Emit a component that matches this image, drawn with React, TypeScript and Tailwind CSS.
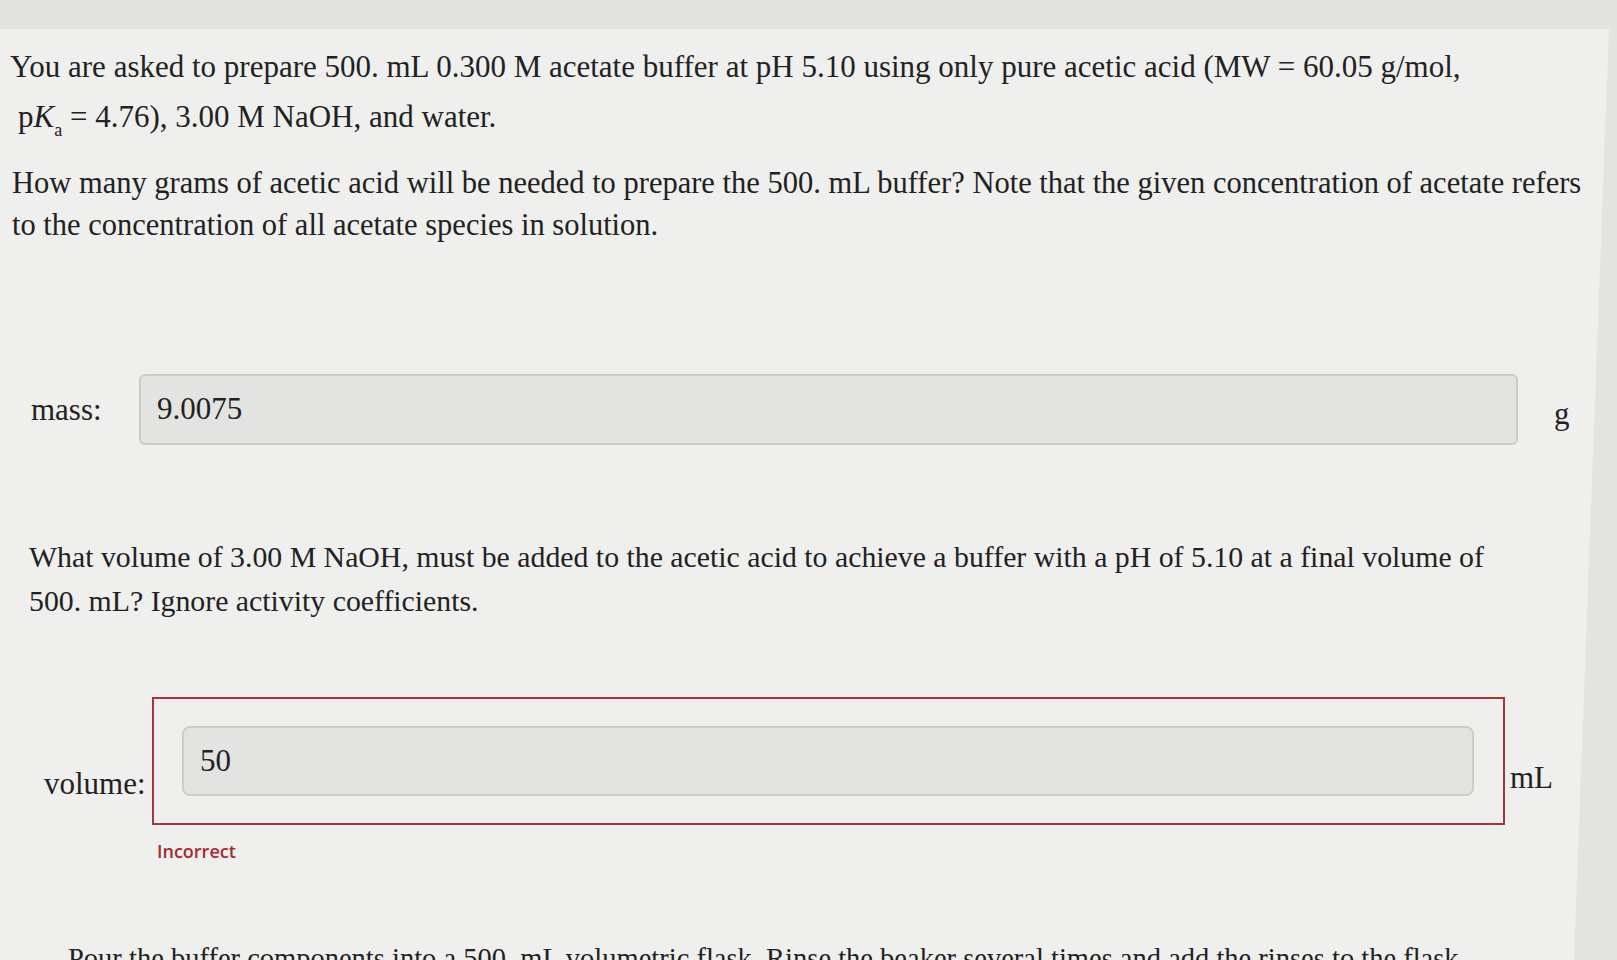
import React from "react";

const serif = { fontFamily: '"Liberation Serif", "Times New Roman", serif' };

export default function App() {
  return (
    <div
      className="w-[1617px] h-[960px] overflow-hidden bg-[#e1e1df] flex flex-col text-[#222222]"
      style={serif}
    >
      <div className="h-[29px] shrink-0 bg-[#e2e2e0]" />
      <div className="flex flex-1 min-h-0 bg-[#efefed]">
        <div className="w-[1570px] shrink-0 pt-[13px]">
          <p className="pl-[10px] text-[31px] leading-[50px] whitespace-nowrap">
            You are asked to prepare 500. mL 0.300 M acetate buffer at pH 5.10 using only pure acetic acid (MW = 60.05 g/mol,
            <br />
            <span className="pl-[8px]">
              p<i>K</i>
              <sub className="text-[18px] align-[-4px]">a</sub> = 4.76), 3.00 M NaOH, and water.
            </span>
          </p>
          <p className="mt-[20px] pl-[12px] text-[30.5px] leading-[42px] whitespace-nowrap">
            How many grams of acetic acid will be needed to prepare the 500. mL buffer? Note that the given concentration of acetate refers
            <br />
            to the concentration of all acetate species in solution.
          </p>

          <div className="mt-[128px] flex items-center">
            <span className="pl-[31px] w-[139px] shrink-0 text-[31px] leading-[32px]">mass:</span>
            <div className="w-[1379px] h-[71px] shrink-0 rounded-[6px] border-2 border-[#cbcbc9] bg-[#e3e3e1] flex items-center pl-[16px] text-[31px]">
              9.0075
            </div>
            <span className="ml-[36px] text-[31px] mt-[10px]">g</span>
          </div>

          <p className="mt-[90px] pl-[29px] text-[29.8px] leading-[44px] whitespace-nowrap">
            What volume of 3.00 M NaOH, must be added to the acetic acid to achieve a buffer with a pH of 5.10 at a final volume of
            <br />
            500. mL? Ignore activity coefficients.
          </p>

          <div className="mt-[74px] flex items-end">
            <span className="pl-[44px] w-[152px] shrink-0 text-[31px] leading-[30px] mb-[26px]">volume:</span>
            <div className="w-[1353px] h-[128px] shrink-0 border-2 border-[#a8343c] flex items-center pl-[28px]">
              <div className="w-[1292px] h-[70px] rounded-[8px] border-2 border-[#cbcbc9] bg-[#e3e3e1] flex items-center pl-[16px] text-[31px]">
                50
              </div>
            </div>
            <span className="ml-[5px] text-[31px] leading-[30px] mb-[32px]">mL</span>
          </div>

          <div
            className="mt-[14px] pl-[157px] text-[18px] font-semibold text-[#a52a32] leading-[24px]"
            style={{ fontFamily: '"Open Sans", "Noto Sans", sans-serif' }}
          >
            Incorrect
          </div>

          <p className="mt-[80px] pl-[68px] text-[28.5px] leading-[32px] whitespace-nowrap">
            Pour the buffer components into a 500. mL volumetric flask. Rinse the beaker several times and add the rinses to the flask.
          </p>
        </div>
        <div className="flex-1 bg-[#e3e3e1] [clip-path:polygon(39px_0,100%_0,100%_100%,4px_100%)]" />
      </div>
    </div>
  );
}
